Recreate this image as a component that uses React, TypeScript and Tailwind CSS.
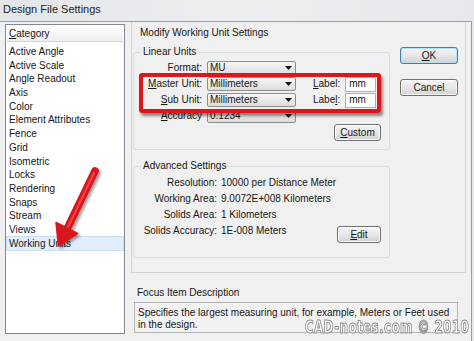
import React from "react";

const categories = [
  "Active Angle",
  "Active Scale",
  "Angle Readout",
  "Axis",
  "Color",
  "Element Attributes",
  "Fence",
  "Grid",
  "Isometric",
  "Locks",
  "Rendering",
  "Snaps",
  "Stream",
  "Views",
  "Working Units",
];

const advanced = [
  ["Resolution:", "10000 per Distance Meter"],
  ["Working Area:", "9.0072E+008 Kilometers"],
  ["Solids Area:", "1 Kilometers"],
];

function Caret() {
  return (
    <svg width="7" height="4" viewBox="0 0 7 4">
      <path d="M0 0h7L3.5 4z" fill="#111" />
    </svg>
  );
}

function Combo({ value }: { value: string }) {
  return (
    <div className="ml-[5px] flex h-[14px] w-[89px] items-center justify-between rounded-[2px] border border-[#8e8f8f] bg-linear-to-b from-[#f6f6f6] to-[#dcdcdc] pl-[2px] pr-[3px] leading-[12px]">
      <span>{value}</span>
      <Caret />
    </div>
  );
}

function Button({ children, def, className }: { children: React.ReactNode; def?: boolean; className?: string }) {
  return (
    <div
      className={`flex h-[17px] items-center justify-center rounded-[3px] border bg-linear-to-b from-[#f4f4f4] via-[#e8e8e8] to-[#d2d2d2] leading-[12px] ${
        def ? "border-[#3c7fb1] shadow-[inset_0_0_0_1px_#b7e1f6]" : "border-[#707070] shadow-[inset_0_0_0_1px_#fbfbfb]"
      } ${className ?? ""}`}
    >
      {children}
    </div>
  );
}

function UnitRow({ label, accel, rest, value, field }: { label?: string; accel: string; rest: string; value: string; field?: React.ReactNode }) {
  return (
    <div className="flex h-[14px] items-center">
      <div className="w-[68px] text-right leading-[12px]">
        {label}
        <span className="underline">{accel}</span>
        {rest}
      </div>
      <Combo value={value} />
      {field}
    </div>
  );
}

function LabelField({ second }: { second?: boolean }) {
  return (
    <div className="ml-[17px] flex items-center leading-[12px]">
      {second ? (
        <span>
          Labe<span className="underline">l</span>:
        </span>
      ) : (
        <span>
          <span className="underline">L</span>abel:
        </span>
      )}
      <div className="ml-[5px] flex h-[15px] w-[31px] items-center border border-[#abadb3] bg-white px-[3px]">mm</div>
    </div>
  );
}

export default function App() {
  return (
    <div className="relative h-[341px] w-[474px] overflow-hidden bg-[#e4e6e8] font-['Liberation_Sans',Arial,sans-serif] text-[10px] text-[#161616]">
      {/* title bar */}
      <div className="h-[21px] bg-linear-to-r from-[#e3e6e9] via-[#eceef0] to-[#e6e8eb] px-[3px] pt-[3px] text-[11px] leading-[13px] text-[#1c1c1c]">
        Design File Settings
      </div>

      <div className="flex h-[320px] w-[472px] border-t border-r border-[#9c9c9c] bg-[#f0f0f0]">
        {/* category list */}
        <div className="ml-[5px] mt-[2px] h-[310px] w-[120px] border border-[#828790] bg-white p-[1px]">
          <div className="h-[16px] border-b border-[#d5d5d5] bg-linear-to-b from-white to-[#eeeeee] px-[2px] pt-[2px] leading-[12px]">
            <span className="underline">C</span>ategory
          </div>
          <div className="pt-[3px]">
            {categories.map((c) => (
              <div
                key={c}
                className={`h-[13.7px] px-[2px] leading-[13.7px] ${
                  c === "Working Units" ? "bg-[#e3eefa] outline outline-[#c9dff5]" : ""
                }`}
              >
                {c}
              </div>
            ))}
          </div>
        </div>

        <div className="ml-[6px] flex flex-col">
          {/* working unit panel */}
          <div className="flex h-[251px] w-[335px] border-x border-b border-[#d3d3d3]">
            <div className="w-[258px]">
              <div className="pl-[8px] pt-[5px] leading-[12px]">Modify Working Unit Settings</div>

              <fieldset className="ml-[1px] mt-[7px] w-[257px] rounded-[3px] border border-[#d5dfe5] pb-[8px]">
                <legend className="ml-[7px] px-[2px] leading-[12px]">Linear Units</legend>
                <div className="flex flex-col gap-[2px] pt-[3px]">
                  <UnitRow accel="" label="Format:" rest="" value="MU" />
                  <UnitRow accel="M" rest="aster Unit:" value="Millimeters" field={<LabelField />} />
                  <UnitRow accel="S" rest="ub Unit:" value="Millimeters" field={<LabelField second />} />
                  <UnitRow accel="A" rest="ccuracy" value="0.1234" />
                </div>
                <div className="mt-[1px] flex justify-end pr-[8px]">
                  <Button className="w-[47px]">
                    <span>
                      <span className="underline">C</span>ustom
                    </span>
                  </Button>
                </div>
              </fieldset>

              <fieldset className="ml-[1px] mt-[10px] w-[257px] rounded-[3px] border border-[#d5dfe5] pb-[14px]">
                <legend className="ml-[7px] px-[2px] leading-[12px]">Advanced Settings</legend>
                <div className="pt-[3px]">
                  {advanced.map(([k, v]) => (
                    <div key={k} className="flex h-[16px] items-center leading-[12px]">
                      <div className="w-[83px] text-right">{k}</div>
                      <div className="ml-[4px]">{v}</div>
                    </div>
                  ))}
                  <div className="flex items-start justify-between">
                    <div className="flex h-[16px] items-center leading-[12px]">
                      <div className="w-[83px] whitespace-nowrap text-right">Solids Accuracy:</div>
                      <div className="ml-[4px]">1E-008 Meters</div>
                    </div>
                    <Button className="mr-[8px] mt-[3px] w-[44px]">
                      <span>
                        <span className="underline">E</span>dit
                      </span>
                    </Button>
                  </div>
                </div>
              </fieldset>
            </div>

            <div className="ml-[10px] flex flex-col gap-[15px] pt-[25px]">
              <Button def className="w-[58px]">
                <span>
                  <span className="underline">O</span>K
                </span>
              </Button>
              <Button className="w-[58px]">Cancel</Button>
            </div>
          </div>

          {/* focus description */}
          <div className="ml-[6px] mt-[14px] leading-[12px]">Focus Item Description</div>
          <div className="ml-[3px] mt-[3px] h-[31px] w-[324px] border border-[#b4b4b4] bg-[#f2f2f2] px-[3px] pt-[4px] leading-[11.5px]">
            Specifies the largest measuring unit, for example, Meters or Feet used in the design.
          </div>
        </div>
      </div>

      {/* red highlight */}
      <div className="absolute left-[139px] top-[73px] h-[40px] w-[242px] rounded-[3px] border-[4px] border-[#e0151b] shadow-[2px_3px_3px_rgba(0,0,0,0.45)]" />

      {/* red arrow */}
      <svg className="absolute left-0 top-0" width="474" height="341" viewBox="0 0 474 341">
        <defs>
          <filter id="sh" x="-20%" y="-20%" width="160%" height="160%">
            <feDropShadow dx="2" dy="2" stdDeviation="1.5" floodColor="#000" floodOpacity="0.4" />
          </filter>
        </defs>
        <g filter="url(#sh)">
          <line x1="95" y1="171" x2="67" y2="229" stroke="#d8141a" strokeWidth="7.5" strokeLinecap="round" />
          <path d="M58.5 246 L56 222.5 L77.5 233.5 Z" fill="#d8141a" stroke="#d8141a" strokeWidth="1.5" strokeLinejoin="round" />
          <line x1="94" y1="173" x2="68" y2="227" stroke="#f2474a" strokeWidth="2" strokeLinecap="round" />
        </g>
      </svg>

      {/* watermark */}
      <div className="absolute bottom-[6px] right-[5px] origin-right scale-x-[0.74] font-['Liberation_Sans_Narrow','DejaVu_Sans_Condensed',sans-serif] text-[18px] font-bold leading-[17px] tracking-[0.5px] whitespace-nowrap text-white [-webkit-text-stroke:1px_#8c8c8c]">
        CAD-notes.com © 2010
      </div>
    </div>
  );
}
